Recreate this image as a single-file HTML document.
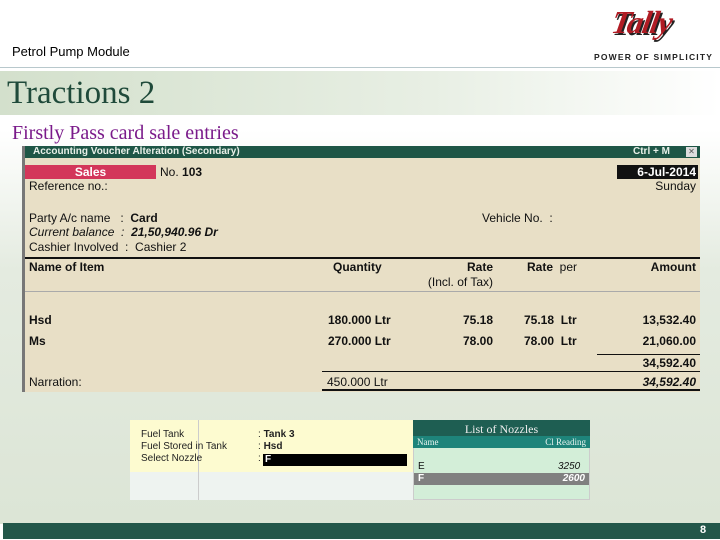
<!DOCTYPE html>
<html><head><meta charset="utf-8"><style>
*{margin:0;padding:0;box-sizing:border-box}
body{width:720px;height:540px;position:relative;overflow:hidden;background:#fff;font-family:"Liberation Sans",sans-serif}
.a{position:absolute;white-space:nowrap}
.t{font-family:"Liberation Sans",sans-serif;font-size:12px;color:#111}
.b{font-weight:bold}
</style></head><body>
<div class="a" style="left:12px;top:44px;font-size:13px;color:#000">Petrol Pump Module</div>
<div class="a" style="left:612px;top:4px;font-family:'Liberation Serif',serif;font-style:italic;font-weight:bold;font-size:32px;color:#b01c24;letter-spacing:-1px;text-shadow:2px 2px 0 #222;transform:skewX(-10deg)">Tally</div>
<div class="a" style="left:594px;top:52px;font-size:8.5px;font-weight:bold;letter-spacing:1.2px;color:#222">POWER OF SIMPLICITY</div>
<div class="a" style="left:0;top:67px;width:720px;height:1px;background:#b8c8cc"></div>
<div class="a" style="left:0;top:70px;width:720px;height:454px;background:linear-gradient(#fff 0,#fff 60px,#e4ebe0 200px,#dce5d6 450px)"></div>
<div class="a" style="left:0;top:71px;width:720px;height:44px;background:linear-gradient(90deg,#d3e0cc,#e8efe4 60%,#fff)"></div>
<div class="a" style="left:7px;top:75px;font-family:'Liberation Serif',serif;font-size:33px;color:#1f4a3a">Tractions 2</div>
<div class="a" style="left:12px;top:122px;font-family:'Liberation Serif',serif;font-size:20px;color:#7a1a8a">Firstly Pass card sale entries</div>

<div class="a" style="left:22px;top:146px;width:678px;height:246px;background:#e8dfc6;border-left:3px solid #777"></div>
<div class="a" style="left:25px;top:146px;width:675px;height:12px;background:#1e5646"></div>
<div class="a" style="left:33px;top:146px;font-size:10px;line-height:12px;font-weight:bold;color:#e8f0e8">Accounting Voucher Alteration (Secondary)</div>
<div class="a" style="left:633px;top:146px;font-size:10px;line-height:12px;font-weight:bold;color:#e8f0e8">Ctrl + M</div>
<div class="a" style="left:686px;top:147px;width:11px;height:10px;background:#ddd;font-size:8px;line-height:10px;text-align:center;color:#555">✕</div>
<div class="a" style="left:25px;top:165px;width:131px;height:14px;background:#d3365a;color:#fff;font-weight:bold;font-size:12px;text-align:center;line-height:14px">Sales</div>
<div class="a t" style="left:160px;top:165px">No. <b>103</b></div>
<div class="a t" style="left:29px;top:179px">Reference no.:</div>
<div class="a" style="left:617px;top:165px;width:81px;height:14px;background:#111;color:#fff;font-weight:bold;font-size:12px;text-align:right;padding-right:2px;line-height:14px">6-Jul-2014</div>
<div class="a t" style="right:24px;top:179px">Sunday</div>
<div class="a t" style="left:29px;top:211px">Party A/c name&nbsp;&nbsp;&nbsp;: &nbsp;<b>Card</b></div>
<div class="a t" style="left:29px;top:225px;font-style:italic">Current balance&nbsp;&nbsp;: &nbsp;<b>21,50,940.96 Dr</b></div>
<div class="a t" style="left:29px;top:240px">Cashier Involved&nbsp;&nbsp;: &nbsp;Cashier 2</div>
<div class="a t" style="left:482px;top:211px">Vehicle No.&nbsp;&nbsp;:</div>
<div class="a" style="left:25px;top:257px;width:675px;height:2px;background:#111"></div>
<div class="a t b" style="left:29px;top:260px">Name of Item</div>
<div class="a t b" style="left:333px;top:260px">Quantity</div>
<div class="a t b" style="right:227px;top:260px">Rate</div>
<div class="a t" style="right:227px;top:275px">(Incl. of Tax)</div>
<div class="a t b" style="left:527px;top:260px">Rate <span style="font-weight:normal">&nbsp;per</span></div>
<div class="a t b" style="right:24px;top:260px">Amount</div>
<div class="a" style="left:25px;top:291px;width:675px;height:1px;background:#aaa"></div>
<div class="a t b" style="left:29px;top:313px">Hsd</div>
<div class="a t b" style="left:328px;top:313px">180.000 Ltr</div>
<div class="a t b" style="right:227px;top:313px">75.18</div>
<div class="a t b" style="left:524px;top:313px">75.18&nbsp; Ltr</div>
<div class="a t b" style="right:24px;top:313px">13,532.40</div>
<div class="a t b" style="left:29px;top:334px">Ms</div>
<div class="a t b" style="left:328px;top:334px">270.000 Ltr</div>
<div class="a t b" style="right:227px;top:334px">78.00</div>
<div class="a t b" style="left:524px;top:334px">78.00&nbsp; Ltr</div>
<div class="a t b" style="right:24px;top:334px">21,060.00</div>
<div class="a" style="left:597px;top:354px;width:103px;height:1px;background:#111"></div>
<div class="a t b" style="right:24px;top:356px">34,592.40</div>
<div class="a" style="left:322px;top:371px;width:378px;height:1px;background:#111"></div>
<div class="a t" style="left:29px;top:375px">Narration:</div>
<div class="a t" style="left:327px;top:375px">450.000 Ltr</div>
<div class="a t b" style="right:24px;top:375px;font-style:italic">34,592.40</div>
<div class="a" style="left:322px;top:389px;width:378px;height:2px;background:#111"></div>

<div class="a" style="left:130px;top:420px;width:284px;height:80px;background:#eef3f0"></div>
<div class="a" style="left:130px;top:420px;width:284px;height:52px;background:#fdfbd0"></div>
<div class="a" style="left:198px;top:420px;width:1px;height:80px;background:#ccc"></div>
<div class="a" style="left:141px;top:429px;font-size:10px;line-height:12px;color:#222">Fuel Tank<br>Fuel Stored in Tank<br>Select Nozzle</div>
<div class="a" style="left:258px;top:429px;font-size:10px;line-height:12px;color:#222">: <b>Tank 3</b><br>: <b>Hsd</b><br>:</div>
<div class="a" style="left:263px;top:454px;width:144px;height:12px;background:#000;color:#fff;font-size:10px;font-weight:bold;padding-left:2px">F</div>
<div class="a" style="left:413px;top:420px;width:177px;height:80px;background:#d3eed8;border:1px solid #ccc"></div>
<div class="a" style="left:413px;top:420px;width:177px;height:16px;background:#1e5e52;color:#eee;font-family:'Liberation Serif',serif;font-size:12px;text-align:center;line-height:18px">List of Nozzles</div>
<div class="a" style="left:413px;top:436px;width:177px;height:12px;background:#1e847a;color:#e8f4f0;font-family:'Liberation Serif',serif;font-size:9px;line-height:12px;padding:0 4px"><span>Name</span><span style="float:right">Cl Reading</span></div>
<div class="a" style="left:418px;top:461px;font-size:10px;color:#111">E</div>
<div class="a" style="left:558px;top:461px;font-size:10px;font-style:italic;color:#111">3250</div>
<div class="a" style="left:414px;top:473px;width:175px;height:12px;background:#808080;color:#fff;font-size:10px;font-weight:bold;line-height:12px;padding:0 4px"><span>F</span><span style="float:right;font-style:italic">2600</span></div>

<div class="a" style="left:3px;top:523px;width:717px;height:16px;background:#23574a"></div>
<div class="a" style="left:700px;top:524px;font-size:11px;font-weight:bold;color:#fff">8</div>
</body></html>
